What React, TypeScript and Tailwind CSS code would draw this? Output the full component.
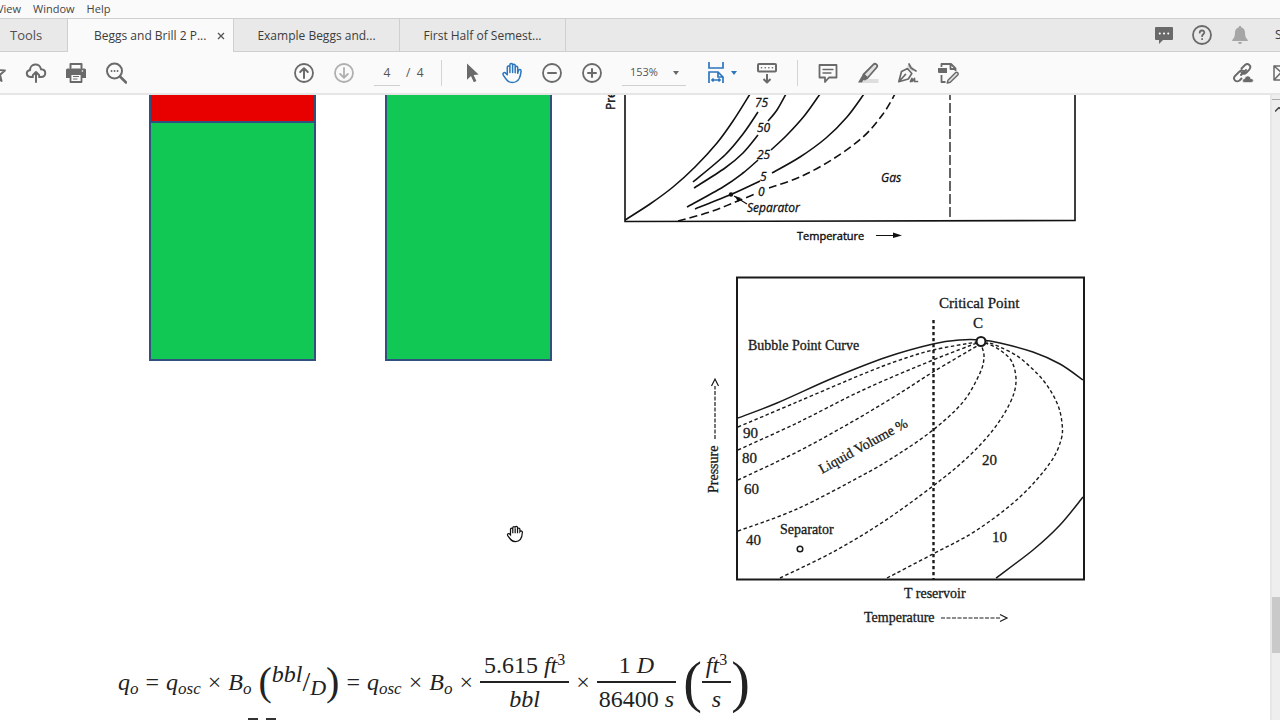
import type { ReactNode } from 'react';

type Point = [number, number];

// Catmull-Rom spline through the points, written as cubic segments
function smooth(points: Point[]) {
    let d = `M${points[0][0]} ${points[0][1]}`;
    for (let i = 0; i < points.length - 1; i++) {
        const p0 = points[Math.max(0, i - 1)];
        const p1 = points[i];
        const p2 = points[i + 1];
        const p3 = points[Math.min(points.length - 1, i + 2)];
        d += ` C${p1[0] + (p2[0] - p0[0]) / 6} ${p1[1] + (p2[1] - p0[1]) / 6} ${p2[0] - (p3[0] - p1[0]) / 6} ${p2[1] - (p3[1] - p1[1]) / 6} ${p2[0]} ${p2[1]}`;
    }
    return d;
}

type IconProps = {
    children: ReactNode;
    className?: string;
};

function Icon({ children, className = 'text-[#6a6a6a]' }: IconProps) {
    return (
        <svg
            viewBox="0 0 22 22"
            className={`size-[22px] shrink-0 ${className}`}
            fill="none"
            stroke="currentColor"
            strokeWidth="1.8"
            strokeLinecap="round"
            strokeLinejoin="round"
            aria-hidden="true"
        >
            {children}
        </svg>
    );
}

function ToolButton({ label, children }: { label: string; children: ReactNode }) {
    return (
        <button type="button" aria-label={label} className="flex h-10 w-10 shrink-0 items-center justify-center">
            {children}
        </button>
    );
}

function Divider() {
    return <div className="h-[26px] w-px shrink-0 bg-[#d4d4d4]" />;
}

function MenuBar() {
    return (
        <nav className="-ml-[3px] flex h-[18px] shrink-0 items-center gap-3 text-[11px] leading-4 text-[#454545]">
            <button type="button">View</button>
            <button type="button">Window</button>
            <button type="button">Help</button>
        </nav>
    );
}

function TabBar() {
    return (
        <div className="flex h-[34px] shrink-0 border-y border-[#cfcfcf] bg-[#e9e9e9] text-xs text-[#3c3c3c]">
            <button type="button" className="w-[68px] shrink-0 border-r border-[#cfcfcf] pt-0.5 pl-2.5 text-left text-[13px] text-[#505050]">
                Tools
            </button>
            <div className="-mb-px flex w-[166px] shrink-0 items-center justify-between border-r border-[#cfcfcf] bg-[#fafafa] pr-2 pl-[26px]">
                <button type="button">Beggs and Brill 2 P...</button>
                <button type="button" aria-label="Close tab">
                    <svg viewBox="0 0 8 8" className="size-2" stroke="#555" strokeWidth="1.3" aria-hidden="true">
                        <path d="M1 1l6 6M7 1L1 7" />
                    </svg>
                </button>
            </div>
            <button type="button" className="w-[166px] shrink-0 border-r border-[#cfcfcf] pt-0.5">
                Example Beggs and...
            </button>
            <button type="button" className="w-[166px] shrink-0 border-r border-[#cfcfcf] pt-0.5">
                First Half of Semest...
            </button>
            <div className="-mr-[35px] ml-auto flex items-center gap-4">
                <button type="button" aria-label="Comments">
                    <Icon>
                        <path d="M3 3h16a1 1 0 0 1 1 1v11a1 1 0 0 1-1 1h-9l-4 4v-4H3a1 1 0 0 1-1-1V4a1 1 0 0 1 1-1z" fill="currentColor" stroke="none" />
                        <path d="M6.700 9.500h.1M11 9.500h.1M15.200 9.500h.1" stroke="#fff" strokeWidth="2" />
                    </Icon>
                </button>
                <button type="button" aria-label="Help">
                    <Icon>
                        <circle cx="11" cy="11" r="9" />
                        <path d="M8.700 8.700c.2-3.200 4.900-2.700 4.600 0-.2 1.600-2.200 1.600-2.200 3.500M11.100 15v.2" />
                    </Icon>
                </button>
                <button type="button" aria-label="Notifications">
                    <Icon className="text-[#a6a6a6]">
                        <path d="M11 2c.9 0 1.400.6 1.400 1.400C15 4 16 6.200 16 8.500c0 4 .8 5.500 2.800 7.500v1H3.200v-1C5.200 14 6 12.500 6 8.500 6 6.200 7 4 9.600 3.400 9.600 2.600 10.100 2 11 2zM9 18h4c-.3 1.500-1 2-2 2s-1.700-.5-2-2z" fill="currentColor" stroke="none" />
                    </Icon>
                </button>
                <button type="button" className="ml-2 w-10 text-left">
                    Sign In
                </button>
            </div>
        </div>
    );
}

function Toolbar() {
    return (
        <div className="flex h-[43px] shrink-0 items-center border-b-2 border-[#e6e6e6] bg-[#fafafa] text-[11px] text-[#555]">
            <div className="-ml-6 flex">
                <ToolButton label="Star">
                    <Icon>
                        <path d="M11 2l2.600 6 6.400.5-4.900 4.200 1.500 6.300-5.600-3.400L5.400 19l1.500-6.300L2 8.500 8.400 8z" />
                    </Icon>
                </ToolButton>
                <ToolButton label="Upload to cloud">
                    <Icon>
                        <path d="M8 15H5.500C.5 14.500.8 8.300 5 8.300 5 1 15 .5 16 7.300c5.800.2 5.500 7.700 0 7.700h-2M11 20v-9.500M7.800 13.200l3.200-3.200 3.200 3.200" strokeWidth="2" />
                    </Icon>
                </ToolButton>
                <ToolButton label="Print">
                    <Icon>
                        <path d="M5.500 6V2h11v4" strokeWidth="2" />
                        <path d="M2.500 6.500h17a1.500 1.500 0 0 1 1.500 1.500v8h-4v-3H5v3H1V8a1.500 1.500 0 0 1 1.500-1.500z" fill="currentColor" stroke="none" />
                        <path d="M5.500 12h11v8h-11z" fill="#fafafa" />
                        <path d="M8.500 14.500h5M8.500 17h3.500" strokeWidth="1.200" />
                        <path d="M17.300 8.900h.2" stroke="#fafafa" strokeWidth="1.500" />
                    </Icon>
                </ToolButton>
                <ToolButton label="Find text">
                    <Icon>
                        <circle cx="9.500" cy="9" r="7.500" strokeWidth="2" />
                        <path d="M15 14.500l6 6" strokeWidth="2.500" />
                        <path d="M6.500 9h.1M9.500 9h.1M12.500 9h.1" strokeWidth="1.800" />
                    </Icon>
                </ToolButton>
            </div>
            <div className="ml-[148px] flex">
                <ToolButton label="Previous page">
                    <Icon>
                        <circle cx="11" cy="11" r="9" />
                        <path d="M11 16V6.500M7.200 10L11 6.200l3.800 3.800" strokeWidth="2" />
                    </Icon>
                </ToolButton>
                <ToolButton label="Next page">
                    <Icon className="text-[#b0b0b0]">
                        <circle cx="11" cy="11" r="9" />
                        <path d="M11 6v9.500M7.200 12l3.800 3.800 3.800-3.800" />
                    </Icon>
                </ToolButton>
            </div>
            <div className="flex w-[77px] shrink-0 items-center gap-1.5 pl-2.5 text-xs">
                <input aria-label="Page number" defaultValue="4" className="h-[26px] w-[26px] border-b border-[#d0d0d0] text-center" />
                <span>/&nbsp; 4</span>
            </div>
            <Divider />
            <div className="ml-2.5 flex">
                <ToolButton label="Select">
                    <Icon>
                        <path d="M6 1.500v16.300l4-3.800 2.800 6.300 2.600-1.200-2.800-6 5-.6z" fill="currentColor" stroke="none" />
                    </Icon>
                </ToolButton>
                <ToolButton label="Pan">
                    <Icon className="text-[#2b76bd]">
                        <path d="M6.300 12.800V5.300c0-1.900 2.600-1.900 2.600 0v5.200V3c0-2 2.700-2 2.700 0v7.500V3.600c0-1.900 2.600-1.900 2.600 0v7.200V5.500c0-1.800 2.500-1.800 2.500 0v5.700l.8-2.600c.6-1.700 2.700-1.300 2.600.5-.3 2.800-.8 5.200-1.900 7.400-1.600 3-4 4-7 4-4.500 0-6.200-3.200-8.800-7.200-1.500-2.300 1.100-3.700 2.600-1.800z" strokeWidth="1.500" />
                    </Icon>
                </ToolButton>
                <ToolButton label="Zoom out">
                    <Icon>
                        <circle cx="11" cy="11" r="9" />
                        <path d="M7 11h8" strokeWidth="2" />
                    </Icon>
                </ToolButton>
                <ToolButton label="Zoom in">
                    <Icon>
                        <circle cx="11" cy="11" r="9" />
                        <path d="M7 11h8M11 7v8" strokeWidth="2" />
                    </Icon>
                </ToolButton>
            </div>
            <div className="relative ml-2.5 shrink-0">
                <select aria-label="Zoom level" className="h-[26px] w-16 appearance-none border-b border-[#d0d0d0] pl-2">
                    <option>153%</option>
                </select>
                <svg viewBox="0 0 6 4" className="pointer-events-none absolute top-[11px] right-[7px] h-1 w-1.5" aria-hidden="true">
                    <path d="M0 0h6L3 4z" fill="#666" />
                </svg>
            </div>
            <button type="button" aria-label="Fit width" className="ml-[19px] flex w-[42px] shrink-0 items-center gap-1">
                <Icon className="text-[#2b76bd]">
                    <path d="M4 0v6h14V0M4 21V10h9l5 5v6M13 10v5h5M7 18h8M8.500 16.500L7 18l1.500 1.500M13.500 16.500L15 18l-1.500 1.500" strokeWidth="1.700" strokeLinecap="butt" strokeLinejoin="miter" />
                </Icon>
                <svg viewBox="0 0 6 4" className="h-1 w-1.5" aria-hidden="true">
                    <path d="M0 0h6L3 4z" fill="#2b76bd" />
                </svg>
            </button>
            <ToolButton label="Hide toolbar">
                <Icon>
                    <rect x="2" y="2" width="18" height="7.500" rx="1" strokeWidth="2" />
                    <path d="M5.500 5.800h.1M9.200 5.800h.1M12.800 5.800h.1M16.400 5.800h.1" strokeWidth="1.600" />
                    <path d="M11 12v8M7.500 17l3.500 3.500 3.500-3.500" strokeWidth="2" strokeLinecap="butt" />
                </Icon>
            </ToolButton>
            <div className="w-2.5 shrink-0" />
            <Divider />
            <div className="ml-2.5 flex">
                <ToolButton label="Add comment">
                    <Icon>
                        <path d="M2.500 3h17v12.500H12L8 20v-4.500H2.500z" />
                        <path d="M6 7.500h10M6 11h8" strokeWidth="1.300" />
                    </Icon>
                </ToolButton>
                <ToolButton label="Highlight">
                    <Icon>
                        <path d="M8 17h13.500v4H4z" fill="#dedede" stroke="none" />
                        <path d="M6.500 12.500L16.300 2.600c2-2 5.200.6 3.300 2.900L10.500 16z" fill="#e0e0e0" />
                        <path d="M6 12l5 4.500-3 2-1.500-.5L5 20.500H1z" fill="currentColor" stroke="none" />
                    </Icon>
                </ToolButton>
                <ToolButton label="Sign">
                    <Icon>
                        <path d="M12.500 2l5 5-2 2.500-5.500-5z" fill="#d5d5d5" stroke="none" />
                        <path d="M12 2l2 4 5 3M10.500 6.500l-6 3-2.700 10.200 9.500-2.700 3.500-5.500zM2 19.500l6-6.500M8 12.800l.5-.3M13.500 19.500l1.500-3v3l2.500-3v3h3" strokeWidth="1.700" />
                    </Icon>
                </ToolButton>
                <ToolButton label="Edit file">
                    <Icon>
                        <path d="M1 6h9v5H2a1 1 0 0 1-1-1z" fill="currentColor" stroke="none" />
                        <path d="M4.500 5V2h9.500l4.500 4.500V9M13.500 2v5h5M4.500 13v7h4" strokeWidth="1.800" strokeLinecap="butt" />
                        <path d="M11 18.200l7.700-7.700c1.500-.7 3 .8 2.300 2.200L13.300 20.300 10.200 21z" fill="#e0e0e0" strokeWidth="1.400" />
                    </Icon>
                </ToolButton>
            </div>
            <div className="-mr-[23px] ml-auto flex">
                <ToolButton label="Share link">
                    <Icon>
                        <path d="M9 13l5-5M9.500 6.500L13 3c3-2.500 7 1 4.500 4.300L14.500 10.500c-1.500 1.500-3.500 1.500-5 0M12 9.500c-1.500-1.300-3-1.300-4.500 0L3 14c-2.700 3 1 7 4.500 4.500l2-2" strokeWidth="1.900" />
                        <path d="M12.500 20.500c-2.700 0-2.500-4 .2-3.800.7-4 5.800-3.500 6 0 3.500-.5 3.500 3.800.5 3.800z" fill="currentColor" stroke="#fafafa" strokeWidth="0.600" />
                    </Icon>
                </ToolButton>
                <ToolButton label="Send by email">
                    <Icon>
                        <path d="M2 4h18v14H2zM2 4l9 8 9-8M2 18l6.500-7M20 18l-6.500-7" strokeWidth="1.500" />
                    </Icon>
                </ToolButton>
            </div>
        </div>
    );
}

const oilfieldCurves: Point[][] = [
    [[625, 220], [650, 204], [673, 187], [695, 167], [717, 143], [733, 121], [750, 94]],
    [[693, 182], [725, 155], [743, 134], [758, 112]],
    [[694, 188], [725, 168], [743, 153], [758, 135]],
    [[768, 121], [777, 110], [786, 94]],
    [[687, 207], [723, 187], [743, 173], [758, 160]],
    [[771, 150], [787, 135], [805, 115], [820, 94]],
    [[695, 209], [732, 194], [760, 181]],
    [[772, 173], [800, 157], [826, 138], [847, 117], [864, 94]],
];

const oilfieldDashed: Point[][] = [
    [[678, 221], [710, 212], [733, 203], [755, 194]],
    [[769, 188], [800, 177], [833, 159], [863, 137], [883, 114], [895, 94]],
];

function SeparatorPhaseDiagram() {
    return (
        <svg viewBox="600 95 500 155" className="h-[155px] w-[500px]" role="img" aria-label="Phase diagram with gas region and separator">
            <g fill="none" stroke="#111" strokeWidth="1.600">
                <path d="M625 90V221.500L1075 220.500V90" />
                <path d="M950 90V220" strokeWidth="1.300" strokeDasharray="10 3" />
                {oilfieldCurves.map((points, index) => (
                    <path key={index} d={smooth(points)} />
                ))}
                {oilfieldDashed.map((points, index) => (
                    <path key={index} d={smooth(points)} strokeDasharray="8 4" />
                ))}
                <path d="M747 204L734 196M876 235.500h20" strokeWidth="1.200" />
            </g>
            <g fill="#111">
                <circle cx="731" cy="194.500" r="2.200" />
                <path d="M735 196l6 2-3 4zM893 232.500l9 3-9 2.500z" />
            </g>
            <g fill="#111" stroke="#111" strokeWidth="0.300" fontFamily='"Open Sans", sans-serif' fontSize="12" fontStyle="italic">
                <text x="755" y="107">75</text>
                <text x="757" y="132">50</text>
                <text x="757" y="159">25</text>
                <text x="760" y="181">5</text>
                <text x="758" y="196">0</text>
                <text x="747" y="212">Separator</text>
                <text x="881" y="182">Gas</text>
            </g>
            <g fill="#111" stroke="#111" strokeWidth="0.400" fontFamily='"Open Sans", sans-serif' fontSize="11">
                <text x="797" y="240">Temperature</text>
                <text transform="translate(615 110) rotate(-90)" fontSize="12">Pressure</text>
            </g>
        </svg>
    );
}

const liquidSolid: Point[][] = [
    [[738, 418], [777, 403], [833, 378], [887, 357], [933, 344], [960, 340], [981, 340], [1000, 343], [1033, 352], [1060, 364], [1083, 380]],
    [[996, 578], [1033, 550], [1060, 525], [1083, 497]],
];

// iso-volume lines: 90, 80, 60, 40, 20 and 10 percent liquid
const liquidDashed: Point[][] = [
    [[738, 427], [797, 402], [863, 374], [897, 361], [933, 350], [977, 342]],
    [[738, 450], [797, 423], [863, 390], [933, 360], [977, 343]],
    [[738, 480], [797, 452], [850, 423], [897, 395], [933, 372], [977, 346]],
    [[738, 531], [797, 509], [863, 475], [897, 455], [933, 430], [963, 402], [980, 373], [984, 357], [982, 347]],
    [[780, 578], [833, 552], [883, 522], [933, 486], [967, 458], [993, 430], [1010, 403], [1016, 382], [1012, 362], [1000, 350], [986, 343]],
    [[887, 578], [933, 554], [977, 530], [1020, 497], [1050, 463], [1061, 440], [1062, 423], [1057, 403], [1043, 380], [1020, 358], [1000, 347], [987, 342]],
];

function LiquidVolumeDiagram() {
    return (
        <svg viewBox="700 265 400 370" className="h-[370px] w-[400px]" role="img" aria-label="Liquid volume phase diagram">
            <g fill="none" stroke="#1a1a1a" strokeWidth="1.500">
                <rect x="737" y="277.500" width="347" height="302" strokeWidth="2" />
                {liquidSolid.map((points, index) => (
                    <path key={index} d={smooth(points)} />
                ))}
                {liquidDashed.map((points, index) => (
                    <path key={index} d={smooth(points)} strokeWidth="1.400" strokeDasharray="3.500 2.500" />
                ))}
                <path d="M933.500 320V579" strokeWidth="2.400" strokeDasharray="3.200 2.800" />
                <circle cx="981" cy="341.500" r="4.500" fill="#fff" strokeWidth="2.200" />
                <circle cx="800" cy="549" r="2.800" />
                <path d="M941 618h59M715 439V386" strokeWidth="1.200" strokeDasharray="4 1.500" />
                <path d="M1000 614.500l7 3.500-7 3.500M711.500 386l3.500-7 3.500 7" strokeWidth="1.200" />
            </g>
            <g fill="#1a1a1a" stroke="#1a1a1a" strokeWidth="0.300" fontFamily='"Liberation Serif", serif' fontSize="14">
                <text x="939" y="308" fontSize="15">Critical Point</text>
                <text x="973" y="328" fontSize="15">C</text>
                <text x="748" y="350">Bubble Point Curve</text>
                <text x="743" y="438" fontSize="15">90</text>
                <text x="742" y="463" fontSize="15">80</text>
                <text x="744" y="494" fontSize="15">60</text>
                <text x="746" y="545" fontSize="15">40</text>
                <text x="982" y="465" fontSize="15">20</text>
                <text x="992" y="542" fontSize="15">10</text>
                <text x="780" y="534">Separator</text>
                <text transform="translate(822 474) rotate(-29)">Liquid Volume %</text>
                <text x="904" y="598">T reservoir</text>
                <text x="864" y="622">Temperature</text>
                <text transform="translate(718 493) rotate(-90)">Pressure</text>
            </g>
        </svg>
    );
}

function Sub({ children }: { children: ReactNode }) {
    return <sub className="top-1 bottom-0 text-[17px] leading-none">{children}</sub>;
}

function Fraction({ top, bottom }: { top: ReactNode; bottom: ReactNode }) {
    return (
        <span className="flex flex-col text-center leading-8">
            <span className="border-b-2 border-[#222] px-1">{top}</span>
            <span className="px-0.5">{bottom}</span>
        </span>
    );
}

function FlowRateEquation() {
    return (
        <div className="flex h-[70px] items-center gap-[7px] pl-[118px] font-['Liberation_Serif',serif] text-2xl whitespace-nowrap text-[#222]">
            <i>q<Sub>o</Sub></i>
            <span>=</span>
            <i>q<Sub>osc</Sub></i>
            <span>×</span>
            <i>B<Sub>o</Sub></i>
            <span className="flex items-center">
                <span className="text-[40px] leading-none">(</span>
                <i className="pb-4">bbl</i>
                <span className="text-[28px] leading-none">/</span>
                <i className="pt-3 text-[22px]">D</i>
                <span className="text-[40px] leading-none">)</span>
            </span>
            <span>=</span>
            <i>q<Sub>osc</Sub></i>
            <span>×</span>
            <i>B<Sub>o</Sub></i>
            <span>×</span>
            <Fraction
                top={<>5.615 <i>ft</i><sup className="text-base leading-none">3</sup></>}
                bottom={<i>bbl</i>}
            />
            <span>×</span>
            <Fraction top={<>1 <i>D</i></>} bottom={<>86400 <i>s</i></>} />
            <span className="flex items-center">
                <span className="text-[56px] leading-none">(</span>
                <Fraction
                    top={<><i>ft</i><sup className="text-base leading-none">3</sup></>}
                    bottom={<i>s</i>}
                />
                <span className="text-[56px] leading-none">)</span>
            </span>
        </div>
    );
}

function HandCursor() {
    return (
        <svg viewBox="0 0 22 22" className="absolute top-[430px] left-[506px] size-[18px]" aria-hidden="true">
            <path
                d="M5.500 12V5.300c0-2 2.800-2 2.800 0V3.500c0-2 2.900-2 2.900 0v-.3c0-2 2.900-2 2.900 0v2c0-2 2.900-1.800 2.900 0v3c1-1.500 3.300-1 3 1-.3 6.800-3 11-8.500 11-5 0-6.500-3-9.200-7-1.600-2.500 1-3.700 3.200-1.200zM8.300 5v5M11.200 4v6M14.100 5v5"
                fill="#fff"
                stroke="#111"
                strokeWidth="1.500"
            />
        </svg>
    );
}

function DocumentPage() {
    return (
        <article className="relative min-w-0 flex-1 overflow-hidden bg-white">
            <div className="flex">
                <div className="ml-[149px] h-[266px] w-[167px] shrink-0 border-x-2 border-b-2 border-[#32507f] bg-[#10c853]">
                    <div className="h-7 border-b-2 border-[#32507f] bg-[#e80000]" />
                </div>
                <div className="ml-[69px] h-[266px] w-[167px] shrink-0 border-x-2 border-b-2 border-[#32507f] bg-[#10c853]" />
                <div className="ml-12 flex shrink-0 flex-col items-end gap-[15px]">
                    <SeparatorPhaseDiagram />
                    <LiquidVolumeDiagram />
                </div>
            </div>
            <div className="mt-3">
                <FlowRateEquation />
            </div>
            <div className="mt-px flex gap-2 pl-[248px]">
                <span className="h-6 w-2.5 border-t-2 border-[#333]" />
                <span className="h-6 w-2.5 border-t-2 border-[#333]" />
            </div>
            <HandCursor />
        </article>
    );
}

function ScrollBar() {
    return (
        <div className="flex w-2.5 shrink-0 flex-col overflow-hidden border-l-2 border-[#e6e6e6] bg-[#eee]">
            <button type="button" aria-label="Scroll up" className="mt-1 flex h-5 w-3.5 shrink-0 items-center justify-center border-t border-[#aaa]">
                <svg viewBox="0 0 8 5" className="h-[5px] w-2" fill="none" stroke="#444" strokeWidth="1.500" aria-hidden="true">
                    <path d="M0 4.500l4-4 4 4" />
                </svg>
            </button>
            <div className="flex-[478]" />
            <div className="h-14 shrink-0 bg-[#c9c9c9]" />
            <div className="flex-[67]" />
        </div>
    );
}

export default function App() {
    return (
        <div className="flex h-screen flex-col overflow-hidden bg-[#fafafa] font-['Open_Sans',sans-serif]">
            <MenuBar />
            <TabBar />
            <Toolbar />
            <main className="flex min-h-0 flex-1">
                <DocumentPage />
                <ScrollBar />
            </main>
        </div>
    );
}
